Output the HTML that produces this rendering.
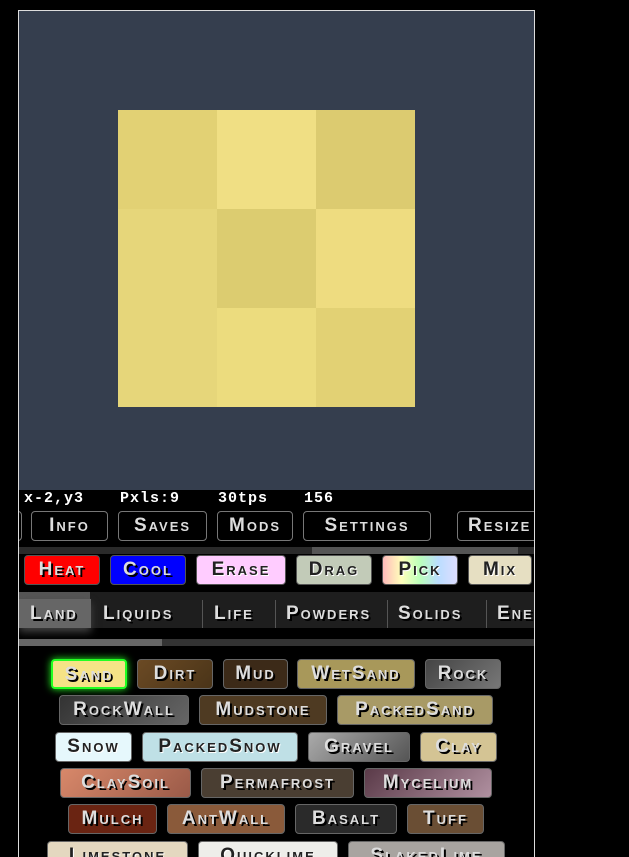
<!DOCTYPE html>
<html><head><meta charset="utf-8"><style>
html,body{margin:0;padding:0;background:#000;width:629px;height:857px;overflow:hidden;position:relative;font-family:"Liberation Sans",sans-serif}
.a{position:absolute}
#frame{left:18px;top:10px;width:515px;height:860px;border:1px solid #ddd;border-bottom:none}
#cv{left:19px;top:11px;width:515px;height:479px;background:#353e4e}
#clip{position:absolute;left:19px;top:490px;width:515px;height:367px;overflow:hidden}
.c{position:absolute;width:99px;height:99px}
.b{position:absolute;box-sizing:border-box;border-radius:4px;color:#ddd;font-weight:bold;font-variant:small-caps;font-size:19px;letter-spacing:2px;text-align:center;text-shadow:2px 2px 0 #000;white-space:nowrap;overflow:hidden}
.t{height:30px;line-height:28px;border:1px solid #777;background:#000;top:21px}
.tool{height:30px;line-height:28px;top:65px;border:1px solid #555}
.e{height:30px;line-height:28px;border:1px solid #666}
.cat{position:absolute;top:109px;height:29px;line-height:29px;color:#ddd;font-weight:bold;font-variant:small-caps;font-size:19px;letter-spacing:2px;text-shadow:2px 2px 0 #000;white-space:nowrap}
.sep{position:absolute;top:110px;width:1px;height:28px;background:#555}
.s{position:absolute;top:0;color:#fff;font-weight:bold;font-size:15px;line-height:18px;letter-spacing:1px;font-family:"Liberation Mono",monospace}
</style></head><body>
<div class="a" id="frame"></div>
<div class="a" id="cv">
 <div class="c" style="left:99px;top:99px;background:#e2d174"></div>
 <div class="c" style="left:198px;top:99px;background:#f0df84"></div>
 <div class="c" style="left:297px;top:99px;background:#dccb70"></div>
 <div class="c" style="left:99px;top:198px;background:#e6d67a"></div>
 <div class="c" style="left:198px;top:198px;background:#dccc70"></div>
 <div class="c" style="left:297px;top:198px;background:#eedc80"></div>
 <div class="c" style="left:99px;top:297px;background:#e6d67a"></div>
 <div class="c" style="left:198px;top:297px;background:#ecdc7e"></div>
 <div class="c" style="left:297px;top:297px;background:#e2d174"></div>
</div>
<div id="clip">
<div class="s" style="left:5px">x-2,y3</div>
<div class="s" style="left:101px">Pxls:9</div>
<div class="s" style="left:199px">30tps</div>
<div class="s" style="left:285px">156</div>
<div class="a" style="left:-6px;top:21px;width:9px;height:30px;border:1px solid #777;border-radius:4px;box-sizing:border-box"></div>
<div class="b t" style="left:12px;width:77px">Info</div>
<div class="b t" style="left:99px;width:89px">Saves</div>
<div class="b t" style="left:198px;width:76px">Mods</div>
<div class="b t" style="left:284px;width:128px">Settings</div>
<div class="b t" style="left:438px;width:95px;text-align:left;padding-left:10px">Resize</div>
<div class="a" style="left:0;top:57px;width:515px;height:7px;background:#2a2a2a"></div>
<div class="a" style="left:293px;top:57px;width:206px;height:7px;background:#555"></div>
<div class="b tool" style="left:5px;width:76px;background:#f00">Heat</div>
<div class="b tool" style="left:91px;width:76px;background:#00f">Cool</div>
<div class="b tool" style="left:177px;width:90px;background:#fcf;color:#222;text-shadow:1px 1px 0 #fff">Erase</div>
<div class="b tool" style="left:277px;width:76px;background:#c2cbb8;color:#222;text-shadow:1px 1px 0 #fff">Drag</div>
<div class="b tool" style="left:363px;width:76px;background:linear-gradient(90deg,#fbb,#ffb,#bfb,#bdf,#ddf);color:#222;text-shadow:1px 1px 0 #fff">Pick</div>
<div class="b tool" style="left:449px;width:64px;background:#e6dfc2;color:#222;text-shadow:1px 1px 0 #fff">Mix</div>
<div class="a" style="left:0;top:102px;width:515px;height:36px;background:#1e1e1e"></div>
<div class="a" style="left:0;top:102px;width:71px;height:7px;background:#555"></div>
<div class="a" style="left:0;top:109px;width:72px;height:29px;background:#666;box-shadow:0 4px 8px #444"></div>
<div class="cat" style="left:11px">Land</div>
<div class="cat" style="left:84px">Liquids</div>
<div class="sep" style="left:183px"></div>
<div class="cat" style="left:195px">Life</div>
<div class="sep" style="left:256px"></div>
<div class="cat" style="left:267px">Powders</div>
<div class="sep" style="left:368px"></div>
<div class="cat" style="left:379px">Solids</div>
<div class="sep" style="left:467px"></div>
<div class="cat" style="left:478px">Energy</div>
<div class="a" style="left:0;top:149px;width:515px;height:7px;background:#333"></div>
<div class="a" style="left:0;top:149px;width:143px;height:7px;background:#666"></div>
</div>

<div class="b e" style="left:51px;top:659px;width:76px;background:#f5e386;border:2px solid #2f2;box-shadow:0 0 8px #2f2">Sand</div>
<div class="b e" style="left:137px;top:659px;width:76px;background:linear-gradient(135deg,#6b4a24,#4a3418)">Dirt</div>
<div class="b e" style="left:223px;top:659px;width:65px;background:#3c2a18">Mud</div>
<div class="b e" style="left:297px;top:659px;width:118px;background:#a8985a">WetSand</div>
<div class="b e" style="left:425px;top:659px;width:76px;background:linear-gradient(135deg,#444,#777)">Rock</div>

<div class="b e" style="left:59px;top:695px;width:130px;background:linear-gradient(135deg,#333,#666)">RockWall</div>
<div class="b e" style="left:199px;top:695px;width:128px;background:#4e3a22">Mudstone</div>
<div class="b e" style="left:337px;top:695px;width:156px;background:#a89a66">PackedSand</div>

<div class="b e" style="left:55px;top:732px;width:77px;background:#e6f8fc;color:#222;text-shadow:1px 1px 0 #fff">Snow</div>
<div class="b e" style="left:142px;top:732px;width:156px;background:#bfe0e6;color:#222;text-shadow:1px 1px 0 #fff">PackedSnow</div>
<div class="b e" style="left:308px;top:732px;width:102px;background:linear-gradient(135deg,#aaa,#555)">Gravel</div>
<div class="b e" style="left:420px;top:732px;width:77px;background:#d4c494">Clay</div>

<div class="b e" style="left:60px;top:768px;width:131px;background:linear-gradient(135deg,#d8886a,#9a5a48)">ClaySoil</div>
<div class="b e" style="left:201px;top:768px;width:153px;background:#4a3e32">Permafrost</div>
<div class="b e" style="left:364px;top:768px;width:128px;background:linear-gradient(135deg,#5a3a48,#b090a0)">Mycelium</div>

<div class="b e" style="left:68px;top:804px;width:89px;background:#6a2412">Mulch</div>
<div class="b e" style="left:167px;top:804px;width:118px;background:#8a5a3a">AntWall</div>
<div class="b e" style="left:295px;top:804px;width:102px;background:#2a2a2a">Basalt</div>
<div class="b e" style="left:407px;top:804px;width:77px;background:#6a4e34">Tuff</div>

<div class="b e" style="left:47px;top:841px;width:141px;background:#e4d8c0;color:#222;text-shadow:1px 1px 0 #fff">Limestone</div>
<div class="b e" style="left:198px;top:841px;width:140px;background:#eeeeea;color:#222;text-shadow:1px 1px 0 #fff">Quicklime</div>
<div class="b e" style="left:348px;top:841px;width:157px;background:#a8a4a0">SlakedLime</div>
</body></html>
